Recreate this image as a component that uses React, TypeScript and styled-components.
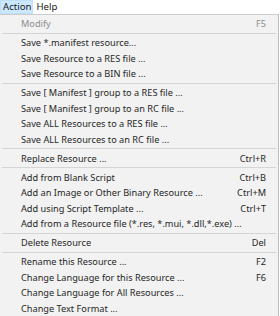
import React from "react";
import styled, { createGlobalStyle } from "styled-components";

const Global = createGlobalStyle`
  html, body { margin: 0; padding: 0; background: #ffffff; }
  body { font-family: "Noto Sans", "Open Sans", sans-serif; overflow: hidden; }
`;

const Page = styled.div`
  width: 280px;
  height: 316px;
  overflow: hidden;
  display: flex;
  flex-direction: column;
`;

const MenuBar = styled.div`
  height: 14px;
  display: flex;
  align-items: stretch;
  background: #ffffff;
`;

const BarItem = styled.div<{ $active?: boolean }>`
  padding: 0 2px 0 3px;
  font-size: 9.6px;
  line-height: 14px;
  color: #1a1a1a;
  background: ${(p) => (p.$active ? "#cce8ff" : "transparent")};
  box-shadow: ${(p) => (p.$active ? "inset 0 0 0 1px #bfe0f8" : "none")};
  & + & { padding-left: 3px; }
`;

const Dropdown = styled.div`
  width: 278px;
  flex: 1;
  background: #f2f2f2;
  border-top: 1px solid #cccccc;
  border-right: 1px solid #bdbdbd;
  padding-top: 1px;
  display: flex;
  flex-direction: column;
`;

const Item = styled.div<{ $disabled?: boolean }>`
  height: 15.5px;
  flex: none;
  display: flex;
  align-items: center;
  padding: 0 12px 0 21px;
  font-size: 9.2px;
  color: ${(p) => (p.$disabled ? "#8d8d8d" : "#262626")};
  white-space: nowrap;
`;

const Label = styled.span`
  flex: 1;
`;

const Shortcut = styled.span<{ $disabled?: boolean }>`
  color: ${(p) => (p.$disabled ? "#8d8d8d" : "#262626")};
`;

const Separator = styled.div`
  height: 3.5px;
  flex: none;
  display: flex;
  align-items: center;
  padding: 0 2px 0 2px;
  &::after {
    content: "";
    flex: 1;
    height: 1px;
    background: #d5d5d5;
  }
`;

type Entry =
  | { sep: true }
  | { label: string; shortcut?: string; disabled?: boolean; sep?: false };

const entries: Entry[] = [
  { label: "Modify", shortcut: "F5", disabled: true },
  { sep: true },
  { label: "Save *.manifest resource..." },
  { label: "Save Resource to a RES file ..." },
  { label: "Save Resource to a BIN file ..." },
  { sep: true },
  { label: "Save [ Manifest ] group to a RES file ..." },
  { label: "Save [ Manifest ] group to an RC file ..." },
  { label: "Save ALL Resources to a RES file ..." },
  { label: "Save ALL Resources to an RC file ..." },
  { sep: true },
  { label: "Replace Resource ...", shortcut: "Ctrl+R" },
  { sep: true },
  { label: "Add from Blank Script", shortcut: "Ctrl+B" },
  { label: "Add an Image or Other Binary Resource ...", shortcut: "Ctrl+M" },
  { label: "Add using Script Template ...", shortcut: "Ctrl+T" },
  { label: "Add from a Resource file (*.res, *.mui, *.dll,*.exe) ..." },
  { sep: true },
  { label: "Delete Resource", shortcut: "Del" },
  { sep: true },
  { label: "Rename this Resource ...", shortcut: "F2" },
  { label: "Change Language for this Resource ...", shortcut: "F6" },
  { label: "Change Language for All Resources ..." },
  { label: "Change Text Format ..." },
];

export default function App() {
  return (
    <Page>
      <Global />
      <MenuBar>
        <BarItem $active>Action</BarItem>
        <BarItem>Help</BarItem>
      </MenuBar>
      <Dropdown>
        {entries.map((e, i) =>
          e.sep ? (
            <Separator key={i} />
          ) : (
            <Item key={i} $disabled={e.disabled}>
              <Label>{e.label}</Label>
              {e.shortcut && <Shortcut $disabled={e.disabled}>{e.shortcut}</Shortcut>}
            </Item>
          )
        )}
      </Dropdown>
    </Page>
  );
}
